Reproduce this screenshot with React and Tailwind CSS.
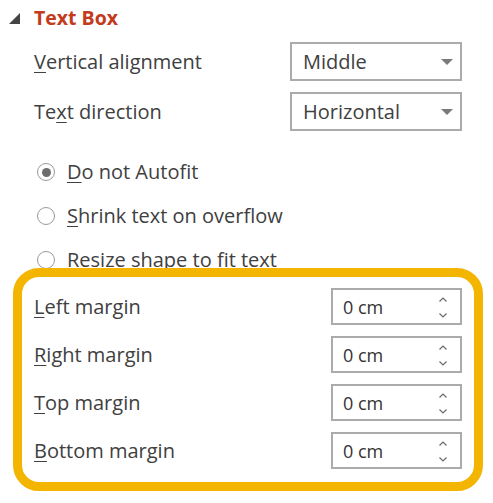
const ChevronUp = () => (
  <svg width="8" height="5" viewBox="0 0 8 5" fill="none" stroke="#6b6b6b" strokeWidth="1.2">
    <path d="M0.5 4.5L4 1L7.5 4.5" />
  </svg>
);

const ChevronDown = () => (
  <svg width="8" height="5" viewBox="0 0 8 5" fill="none" stroke="#6b6b6b" strokeWidth="1.2">
    <path d="M0.5 0.5L4 4L7.5 0.5" />
  </svg>
);

function Key({ children }) {
  return <span className="underline decoration-1 underline-offset-[3px]">{children}</span>;
}

function Dropdown({ value }) {
  return (
    <div className="w-[172px] h-[39px] border-2 border-[#ababab] bg-white flex items-center justify-between pl-[11px] pr-[7px]">
      <span className="text-[20px] text-[#404040]">{value}</span>
      <svg width="12" height="6" viewBox="0 0 12 6">
        <path d="M0 0H12L6 6Z" fill="#7a7a7a" />
      </svg>
    </div>
  );
}

function Radio({ checked, children }) {
  return (
    <div className="h-[44px] flex items-center pl-[37px]">
      <span className="w-[18px] h-[18px] rounded-full border border-[#9a9a9a] bg-white flex items-center justify-center">
        {checked && <span className="w-[9px] h-[9px] rounded-full bg-[#6e6e6e]" />}
      </span>
      <span className="ml-[12px] text-[20px] text-[#404040]">{children}</span>
    </div>
  );
}

function MarginRow({ children }) {
  return (
    <div className="flex items-center justify-between">
      <span className="text-[20px] text-[#404040]">{children}</span>
      <div className="w-[131px] h-[37px] border-2 border-[#ababab] bg-white flex items-center justify-between pl-[10px] pr-[13px]">
        <span className="text-[18px] text-[#333333]">0 cm</span>
        <div className="flex flex-col gap-[11px] pt-[1px]">
          <ChevronUp />
          <ChevronDown />
        </div>
      </div>
    </div>
  );
}

export default function App() {
  return (
    <div className="w-[493px] h-[503px] bg-white overflow-hidden font-['Open_Sans',sans-serif] leading-none">
      <div className="h-[36px] flex items-center pl-[9px]">
        <svg width="11" height="11" viewBox="0 0 11 11">
          <path d="M11 0V11H0Z" fill="#444444" />
        </svg>
        <span className="ml-[14px] text-[19.5px] font-bold text-[#c23b1c]">Text Box</span>
      </div>

      <div className="pl-[34px] pr-[31px] mt-[6px] flex flex-col gap-[11px]">
        <div className="flex items-center justify-between">
          <span className="text-[20px] text-[#404040]">
            <Key>V</Key>ertical alignment
          </span>
          <Dropdown value="Middle" />
        </div>
        <div className="flex items-center justify-between">
          <span className="text-[20px] text-[#404040]">
            Te<Key>x</Key>t direction
          </span>
          <Dropdown value="Horizontal" />
        </div>
      </div>

      <div className="mt-[19px]">
        <Radio checked>
          <Key>D</Key>o not Autofit
        </Radio>
        <Radio>
          <Key>S</Key>hrink text on overflow
        </Radio>
        <Radio>Resize shape to fit text</Radio>
      </div>

      <div className="relative -mt-[14px] ml-[13px] mr-[10px] border-[9px] border-[#f3b500] rounded-[26px] px-[12px] pt-[11px] pb-[13px] flex flex-col gap-[11px]">
        <MarginRow>
          <Key>L</Key>eft margin
        </MarginRow>
        <MarginRow>
          <Key>R</Key>ight margin
        </MarginRow>
        <MarginRow>
          <Key>T</Key>op margin
        </MarginRow>
        <MarginRow>
          <Key>B</Key>ottom margin
        </MarginRow>
      </div>
    </div>
  );
}
